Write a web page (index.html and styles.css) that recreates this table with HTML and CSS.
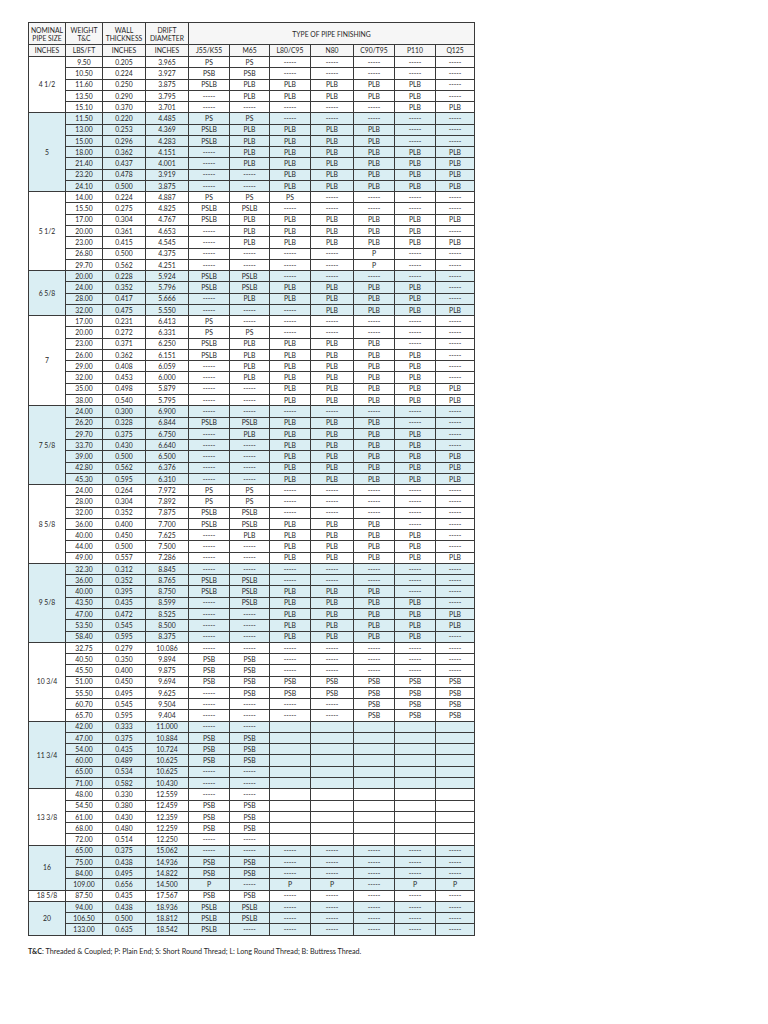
FILE: index.html
```html
<!DOCTYPE html>
<html>
<head>
<meta charset="utf-8">
<link rel="stylesheet" href="styles.css">
</head>
<body>
<div class="page">
<table class="pipes">
<colgroup>
<col class="c37"><col class="c37"><col class="c43"><col class="c43"><col class="c41"><col class="c40"><col class="c41"><col class="c43"><col class="c41"><col class="c41"><col class="c39">
</colgroup>
<thead>
<tr class="h1"><th>NOMINAL<br>PIPE SIZE</th><th>WEIGHT<br>T&amp;C</th><th>WALL<br>THICKNESS</th><th>DRIFT<br>DIAMETER</th><th colspan="7">TYPE OF PIPE FINISHING</th></tr>
<tr class="h2"><th>INCHES</th><th>LBS/FT</th><th>INCHES</th><th>INCHES</th><th>J55/K55</th><th>M65</th><th>L80/C95</th><th>N80</th><th>C90/T95</th><th>P110</th><th>Q125</th></tr>
</thead>
<tbody>
<tr><td rowspan="5">4 1/2</td><td>9.50</td><td>0.205</td><td>3.965</td><td>PS</td><td>PS</td><td>-----</td><td>-----</td><td>-----</td><td>-----</td><td>-----</td></tr>
<tr><td>10.50</td><td>0.224</td><td>3.927</td><td>PSB</td><td>PSB</td><td>-----</td><td>-----</td><td>-----</td><td>-----</td><td>-----</td></tr>
<tr><td>11.60</td><td>0.250</td><td>3.875</td><td>PSLB</td><td>PLB</td><td>PLB</td><td>PLB</td><td>PLB</td><td>PLB</td><td>-----</td></tr>
<tr><td>13.50</td><td>0.290</td><td>3.795</td><td>-----</td><td>PLB</td><td>PLB</td><td>PLB</td><td>PLB</td><td>PLB</td><td>-----</td></tr>
<tr><td>15.10</td><td>0.370</td><td>3.701</td><td>-----</td><td>-----</td><td>-----</td><td>-----</td><td>-----</td><td>PLB</td><td>PLB</td></tr>
</tbody>
<tbody class="blue">
<tr><td rowspan="7">5</td><td>11.50</td><td>0.220</td><td>4.485</td><td>PS</td><td>PS</td><td>-----</td><td>-----</td><td>-----</td><td>-----</td><td>-----</td></tr>
<tr><td>13.00</td><td>0.253</td><td>4.369</td><td>PSLB</td><td>PLB</td><td>PLB</td><td>PLB</td><td>PLB</td><td>-----</td><td>-----</td></tr>
<tr><td>15.00</td><td>0.296</td><td>4.283</td><td>PSLB</td><td>PLB</td><td>PLB</td><td>PLB</td><td>PLB</td><td>-----</td><td>-----</td></tr>
<tr><td>18.00</td><td>0.362</td><td>4.151</td><td>-----</td><td>PLB</td><td>PLB</td><td>PLB</td><td>PLB</td><td>PLB</td><td>PLB</td></tr>
<tr><td>21.40</td><td>0.437</td><td>4.001</td><td>-----</td><td>PLB</td><td>PLB</td><td>PLB</td><td>PLB</td><td>PLB</td><td>PLB</td></tr>
<tr><td>23.20</td><td>0.478</td><td>3.919</td><td>-----</td><td>-----</td><td>PLB</td><td>PLB</td><td>PLB</td><td>PLB</td><td>PLB</td></tr>
<tr><td>24.10</td><td>0.500</td><td>3.875</td><td>-----</td><td>-----</td><td>PLB</td><td>PLB</td><td>PLB</td><td>PLB</td><td>PLB</td></tr>
</tbody>
<tbody>
<tr><td rowspan="7">5 1/2</td><td>14.00</td><td>0.224</td><td>4.887</td><td>PS</td><td>PS</td><td>PS</td><td>-----</td><td>-----</td><td>-----</td><td>-----</td></tr>
<tr><td>15.50</td><td>0.275</td><td>4.825</td><td>PSLB</td><td>PSLB</td><td>-----</td><td>-----</td><td>-----</td><td>-----</td><td>-----</td></tr>
<tr><td>17.00</td><td>0.304</td><td>4.767</td><td>PSLB</td><td>PLB</td><td>PLB</td><td>PLB</td><td>PLB</td><td>PLB</td><td>PLB</td></tr>
<tr><td>20.00</td><td>0.361</td><td>4.653</td><td>-----</td><td>PLB</td><td>PLB</td><td>PLB</td><td>PLB</td><td>PLB</td><td>-----</td></tr>
<tr><td>23.00</td><td>0.415</td><td>4.545</td><td>-----</td><td>PLB</td><td>PLB</td><td>PLB</td><td>PLB</td><td>PLB</td><td>PLB</td></tr>
<tr><td>26.80</td><td>0.500</td><td>4.375</td><td>-----</td><td>-----</td><td>-----</td><td>-----</td><td>P</td><td>-----</td><td>-----</td></tr>
<tr><td>29.70</td><td>0.562</td><td>4.251</td><td>-----</td><td>-----</td><td>-----</td><td>-----</td><td>P</td><td>-----</td><td>-----</td></tr>
</tbody>
<tbody class="blue">
<tr><td rowspan="4">6 5/8</td><td>20.00</td><td>0.228</td><td>5.924</td><td>PSLB</td><td>PSLB</td><td>-----</td><td>-----</td><td>-----</td><td>-----</td><td>-----</td></tr>
<tr><td>24.00</td><td>0.352</td><td>5.796</td><td>PSLB</td><td>PSLB</td><td>PLB</td><td>PLB</td><td>PLB</td><td>PLB</td><td>-----</td></tr>
<tr><td>28.00</td><td>0.417</td><td>5.666</td><td>-----</td><td>PLB</td><td>PLB</td><td>PLB</td><td>PLB</td><td>PLB</td><td>-----</td></tr>
<tr><td>32.00</td><td>0.475</td><td>5.550</td><td>-----</td><td>-----</td><td>-----</td><td>PLB</td><td>PLB</td><td>PLB</td><td>PLB</td></tr>
</tbody>
<tbody>
<tr><td rowspan="8">7</td><td>17.00</td><td>0.231</td><td>6.413</td><td>PS</td><td>-----</td><td>-----</td><td>-----</td><td>-----</td><td>-----</td><td>-----</td></tr>
<tr><td>20.00</td><td>0.272</td><td>6.331</td><td>PS</td><td>PS</td><td>-----</td><td>-----</td><td>-----</td><td>-----</td><td>-----</td></tr>
<tr><td>23.00</td><td>0.371</td><td>6.250</td><td>PSLB</td><td>PLB</td><td>PLB</td><td>PLB</td><td>PLB</td><td>-----</td><td>-----</td></tr>
<tr><td>26.00</td><td>0.362</td><td>6.151</td><td>PSLB</td><td>PLB</td><td>PLB</td><td>PLB</td><td>PLB</td><td>PLB</td><td>-----</td></tr>
<tr><td>29.00</td><td>0.408</td><td>6.059</td><td>-----</td><td>PLB</td><td>PLB</td><td>PLB</td><td>PLB</td><td>PLB</td><td>-----</td></tr>
<tr><td>32.00</td><td>0.453</td><td>6.000</td><td>-----</td><td>PLB</td><td>PLB</td><td>PLB</td><td>PLB</td><td>PLB</td><td>-----</td></tr>
<tr><td>35.00</td><td>0.498</td><td>5.879</td><td>-----</td><td>-----</td><td>PLB</td><td>PLB</td><td>PLB</td><td>PLB</td><td>PLB</td></tr>
<tr><td>38.00</td><td>0.540</td><td>5.795</td><td>-----</td><td>-----</td><td>PLB</td><td>PLB</td><td>PLB</td><td>PLB</td><td>PLB</td></tr>
</tbody>
<tbody class="blue">
<tr><td rowspan="7">7 5/8</td><td>24.00</td><td>0.300</td><td>6.900</td><td>-----</td><td>-----</td><td>-----</td><td>-----</td><td>-----</td><td>-----</td><td>-----</td></tr>
<tr><td>26.20</td><td>0.328</td><td>6.844</td><td>PSLB</td><td>PSLB</td><td>PLB</td><td>PLB</td><td>PLB</td><td>-----</td><td>-----</td></tr>
<tr><td>29.70</td><td>0.375</td><td>6.750</td><td>-----</td><td>PLB</td><td>PLB</td><td>PLB</td><td>PLB</td><td>PLB</td><td>-----</td></tr>
<tr><td>33.70</td><td>0.430</td><td>6.640</td><td>-----</td><td>-----</td><td>PLB</td><td>PLB</td><td>PLB</td><td>PLB</td><td>-----</td></tr>
<tr><td>39.00</td><td>0.500</td><td>6.500</td><td>-----</td><td>-----</td><td>PLB</td><td>PLB</td><td>PLB</td><td>PLB</td><td>PLB</td></tr>
<tr><td>42.80</td><td>0.562</td><td>6.376</td><td>-----</td><td>-----</td><td>PLB</td><td>PLB</td><td>PLB</td><td>PLB</td><td>PLB</td></tr>
<tr><td>45.30</td><td>0.595</td><td>6.310</td><td>-----</td><td>-----</td><td>PLB</td><td>PLB</td><td>PLB</td><td>PLB</td><td>PLB</td></tr>
</tbody>
<tbody>
<tr><td rowspan="7">8 5/8</td><td>24.00</td><td>0.264</td><td>7.972</td><td>PS</td><td>PS</td><td>-----</td><td>-----</td><td>-----</td><td>-----</td><td>-----</td></tr>
<tr><td>28.00</td><td>0.304</td><td>7.892</td><td>PS</td><td>PS</td><td>-----</td><td>-----</td><td>-----</td><td>-----</td><td>-----</td></tr>
<tr><td>32.00</td><td>0.352</td><td>7.875</td><td>PSLB</td><td>PSLB</td><td>-----</td><td>-----</td><td>-----</td><td>-----</td><td>-----</td></tr>
<tr><td>36.00</td><td>0.400</td><td>7.700</td><td>PSLB</td><td>PSLB</td><td>PLB</td><td>PLB</td><td>PLB</td><td>-----</td><td>-----</td></tr>
<tr><td>40.00</td><td>0.450</td><td>7.625</td><td>-----</td><td>PLB</td><td>PLB</td><td>PLB</td><td>PLB</td><td>PLB</td><td>-----</td></tr>
<tr><td>44.00</td><td>0.500</td><td>7.500</td><td>-----</td><td>-----</td><td>PLB</td><td>PLB</td><td>PLB</td><td>PLB</td><td>-----</td></tr>
<tr><td>49.00</td><td>0.557</td><td>7.286</td><td>-----</td><td>-----</td><td>PLB</td><td>PLB</td><td>PLB</td><td>PLB</td><td>PLB</td></tr>
</tbody>
<tbody class="blue">
<tr><td rowspan="7">9 5/8</td><td>32.30</td><td>0.312</td><td>8.845</td><td>-----</td><td>-----</td><td>-----</td><td>-----</td><td>-----</td><td>-----</td><td>-----</td></tr>
<tr><td>36.00</td><td>0.352</td><td>8.765</td><td>PSLB</td><td>PSLB</td><td>-----</td><td>-----</td><td>-----</td><td>-----</td><td>-----</td></tr>
<tr><td>40.00</td><td>0.395</td><td>8.750</td><td>PSLB</td><td>PSLB</td><td>PLB</td><td>PLB</td><td>PLB</td><td>-----</td><td>-----</td></tr>
<tr><td>43.50</td><td>0.435</td><td>8.599</td><td>-----</td><td>PSLB</td><td>PLB</td><td>PLB</td><td>PLB</td><td>PLB</td><td>-----</td></tr>
<tr><td>47.00</td><td>0.472</td><td>8.525</td><td>-----</td><td>-----</td><td>PLB</td><td>PLB</td><td>PLB</td><td>PLB</td><td>PLB</td></tr>
<tr><td>53.50</td><td>0.545</td><td>8.500</td><td>-----</td><td>-----</td><td>PLB</td><td>PLB</td><td>PLB</td><td>PLB</td><td>PLB</td></tr>
<tr><td>58.40</td><td>0.595</td><td>8.375</td><td>-----</td><td>-----</td><td>PLB</td><td>PLB</td><td>PLB</td><td>PLB</td><td>-----</td></tr>
</tbody>
<tbody>
<tr><td rowspan="7">10 3/4</td><td>32.75</td><td>0.279</td><td>10.086</td><td>-----</td><td>-----</td><td>-----</td><td>-----</td><td>-----</td><td>-----</td><td>-----</td></tr>
<tr><td>40.50</td><td>0.350</td><td>9.894</td><td>PSB</td><td>PSB</td><td>-----</td><td>-----</td><td>-----</td><td>-----</td><td>-----</td></tr>
<tr><td>45.50</td><td>0.400</td><td>9.875</td><td>PSB</td><td>PSB</td><td>-----</td><td>-----</td><td>-----</td><td>-----</td><td>-----</td></tr>
<tr><td>51.00</td><td>0.450</td><td>9.694</td><td>PSB</td><td>PSB</td><td>PSB</td><td>PSB</td><td>PSB</td><td>PSB</td><td>PSB</td></tr>
<tr><td>55.50</td><td>0.495</td><td>9.625</td><td>-----</td><td>PSB</td><td>PSB</td><td>PSB</td><td>PSB</td><td>PSB</td><td>PSB</td></tr>
<tr><td>60.70</td><td>0.545</td><td>9.504</td><td>-----</td><td>-----</td><td>-----</td><td>-----</td><td>PSB</td><td>PSB</td><td>PSB</td></tr>
<tr><td>65.70</td><td>0.595</td><td>9.404</td><td>-----</td><td>-----</td><td>-----</td><td>-----</td><td>PSB</td><td>PSB</td><td>PSB</td></tr>
</tbody>
<tbody class="blue">
<tr><td rowspan="6">11 3/4</td><td>42.00</td><td>0.333</td><td>11.000</td><td>-----</td><td>-----</td><td></td><td></td><td></td><td></td><td></td></tr>
<tr><td>47.00</td><td>0.375</td><td>10.884</td><td>PSB</td><td>PSB</td><td></td><td></td><td></td><td></td><td></td></tr>
<tr><td>54.00</td><td>0.435</td><td>10.724</td><td>PSB</td><td>PSB</td><td></td><td></td><td></td><td></td><td></td></tr>
<tr><td>60.00</td><td>0.489</td><td>10.625</td><td>PSB</td><td>PSB</td><td></td><td></td><td></td><td></td><td></td></tr>
<tr><td>65.00</td><td>0.534</td><td>10.625</td><td>-----</td><td>-----</td><td></td><td></td><td></td><td></td><td></td></tr>
<tr><td>71.00</td><td>0.582</td><td>10.430</td><td>-----</td><td>-----</td><td></td><td></td><td></td><td></td><td></td></tr>
</tbody>
<tbody>
<tr><td rowspan="5">13 3/8</td><td>48.00</td><td>0.330</td><td>12.559</td><td>-----</td><td>-----</td><td></td><td></td><td></td><td></td><td></td></tr>
<tr><td>54.50</td><td>0.380</td><td>12.459</td><td>PSB</td><td>PSB</td><td></td><td></td><td></td><td></td><td></td></tr>
<tr><td>61.00</td><td>0.430</td><td>12.359</td><td>PSB</td><td>PSB</td><td></td><td></td><td></td><td></td><td></td></tr>
<tr><td>68.00</td><td>0.480</td><td>12.259</td><td>PSB</td><td>PSB</td><td></td><td></td><td></td><td></td><td></td></tr>
<tr><td>72.00</td><td>0.514</td><td>12.250</td><td>-----</td><td>-----</td><td></td><td></td><td></td><td></td><td></td></tr>
</tbody>
<tbody class="blue">
<tr><td rowspan="4">16</td><td>65.00</td><td>0.375</td><td>15.062</td><td>-----</td><td>-----</td><td>-----</td><td>-----</td><td>-----</td><td>-----</td><td>-----</td></tr>
<tr><td>75.00</td><td>0.438</td><td>14.936</td><td>PSB</td><td>PSB</td><td>-----</td><td>-----</td><td>-----</td><td>-----</td><td>-----</td></tr>
<tr><td>84.00</td><td>0.495</td><td>14.822</td><td>PSB</td><td>PSB</td><td>-----</td><td>-----</td><td>-----</td><td>-----</td><td>-----</td></tr>
<tr><td>109.00</td><td>0.656</td><td>14.500</td><td>P</td><td>-----</td><td>P</td><td>P</td><td>-----</td><td>P</td><td>P</td></tr>
</tbody>
<tbody>
<tr><td>18 5/8</td><td>87.50</td><td>0.435</td><td>17.567</td><td>PSB</td><td>PSB</td><td>-----</td><td>-----</td><td>-----</td><td>-----</td><td>-----</td></tr>
</tbody>
<tbody class="blue">
<tr><td rowspan="3">20</td><td>94.00</td><td>0.438</td><td>18.936</td><td>PSLB</td><td>PSLB</td><td>-----</td><td>-----</td><td>-----</td><td>-----</td><td>-----</td></tr>
<tr><td>106.50</td><td>0.500</td><td>18.812</td><td>PSLB</td><td>PSLB</td><td>-----</td><td>-----</td><td>-----</td><td>-----</td><td>-----</td></tr>
<tr><td>133.00</td><td>0.635</td><td>18.542</td><td>PSLB</td><td>-----</td><td>-----</td><td>-----</td><td>-----</td><td>-----</td><td>-----</td></tr>
</tbody>
</table>
<p class="note"><b>T&amp;C</b>: Threaded &amp; Coupled; P: Plain End; S: Short Round Thread; L: Long Round Thread; B: Buttress Thread.</p>
</div>
</body>
</html>
```

FILE: styles.css
```css
html, body {
  margin: 0;
  padding: 0;
  background: #ffffff;
}

.page {
  padding: 22px 0 0 28px;
  font-family: Lato, "Liberation Sans", sans-serif;
  color: #262626;
}

.pipes {
  border-collapse: collapse;
  table-layout: fixed;
  width: 446px;
  font-size: 6.8px;
  line-height: 1;
}

.c37 { width: 37px; }
.c39 { width: 39px; }
.c40 { width: 40px; }
.c41 { width: 41px; }
.c43 { width: 43px; }

.pipes th,
.pipes td {
  border: 1px solid #3a3a3a;
  padding: 0;
  text-align: center;
  vertical-align: middle;
  white-space: nowrap;
  overflow: hidden;
}

.pipes th {
  font-weight: normal;
  background: #f6f6f6;
}

.pipes .h1 th {
  height: 21px;
  line-height: 8px;
}

.pipes .h2 th {
  height: 11px;
}

.pipes td {
  height: 10.27px;
}

.pipes tbody.blue td {
  background: #daeef3;
}

.note {
  margin: 11px 0 0 0;
  font-size: 7.2px;
  color: #262626;
}

.note b {
  font-weight: bold;
}
```
